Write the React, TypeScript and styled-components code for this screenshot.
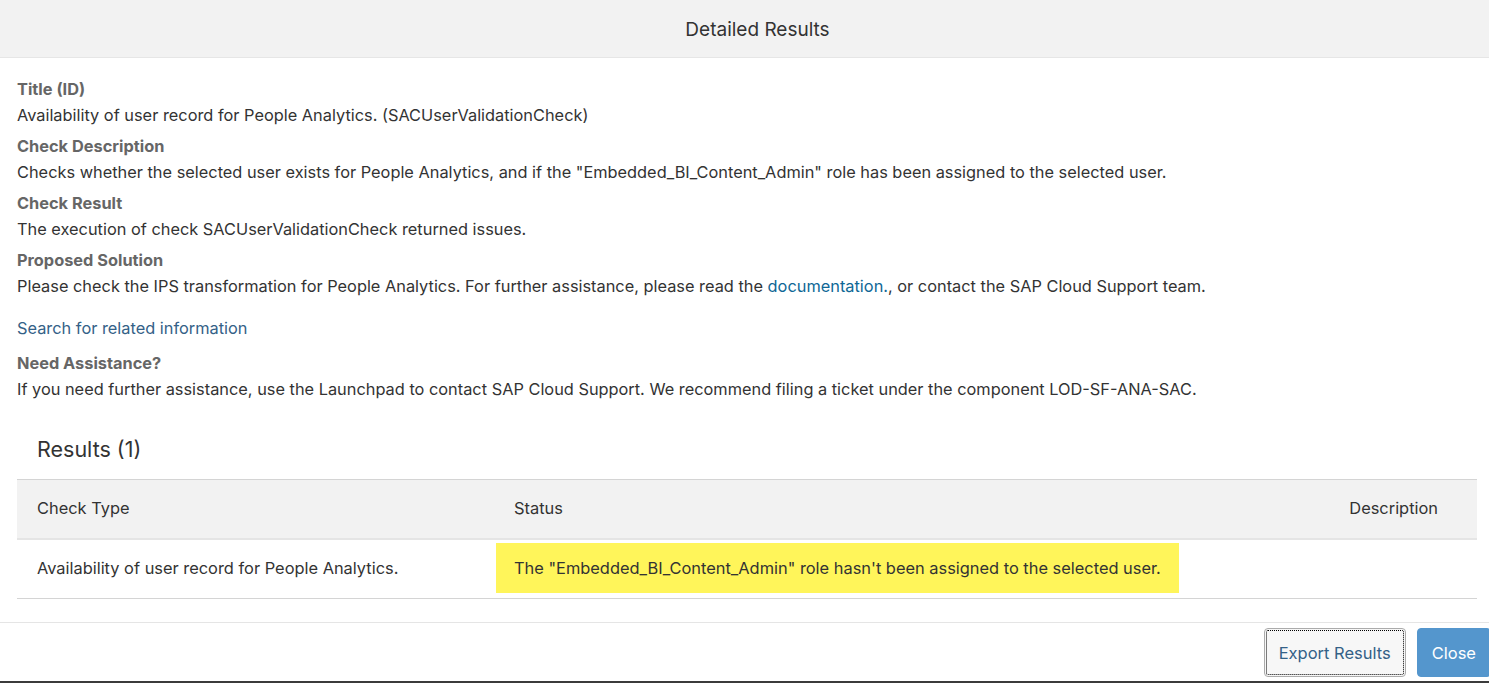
import React from "react";
import styled, { createGlobalStyle } from "styled-components";

const GlobalStyle = createGlobalStyle`
  html, body {
    margin: 0;
    padding: 0;
    background: #3b3b3b;
    font-family: Inter, "Liberation Sans", Arial, sans-serif;
  }
  * { box-sizing: border-box; }
`;

const Dialog = styled.div`
  width: 1489px;
  height: 681px;
  background: #fff;
  display: flex;
  flex-direction: column;
  overflow: hidden;
`;

const Header = styled.header`
  height: 58px;
  flex-shrink: 0;
  background: #f2f2f2;
  border-bottom: 1px solid #e6e6e6;
  display: flex;
  align-items: center;
  justify-content: center;
  font-size: 19px;
  color: #333;
  padding: 1px 0 0 26px;
`;

const Content = styled.main`
  flex: 1;
  padding: 18px 12px 0 17px;
  color: #333;
  font-size: 16.35px;
`;

const Section = styled.section<{ $gap?: number }>`
  margin-top: ${(p) => p.$gap ?? 5}px;
  line-height: 26px;
`;

const Label = styled.div`
  font-weight: 700;
  color: #666;
`;

const Value = styled.div`
  color: #333;
`;

const DocLink = styled.a`
  color: #0f6796;
  text-decoration: none;
`;

const SearchLink = styled.a`
  display: block;
  margin-top: 16px;
  line-height: 26px;
  color: #346187;
  text-decoration: none;
`;

const ResultsTitle = styled.h2`
  margin: 0;
  height: 77px;
  padding: 34px 0 0 20px;
  font-size: 21.5px;
  font-weight: normal;
  line-height: 26px;
  color: #333;
`;

const Table = styled.div`
  display: grid;
  grid-template-columns: 477px 1fr 240px;
  border-top: 1px solid #d4d4d4;
  font-size: 16.4px;
`;

const HeadCell = styled.div<{ $right?: boolean }>`
  height: 60px;
  display: flex;
  align-items: center;
  justify-content: ${(p) => (p.$right ? "flex-end" : "flex-start")};
  padding: ${(p) => (p.$right ? "0 39px 3px 0" : "0 0 3px 20px")};
  background: #f2f2f2;
  border-bottom: 2px solid #e5e5e5;
  color: #333;
`;

const Cell = styled.div<{ $pad?: number }>`
  height: 59px;
  display: flex;
  align-items: center;
  padding-left: ${(p) => p.$pad ?? 20}px;
  padding-bottom: 2px;
  border-bottom: 1px solid #d4d4d4;
  color: #333;
  white-space: nowrap;
`;

const Highlight = styled.span`
  display: inline-flex;
  align-items: center;
  height: 50px;
  padding: 0 18px;
  background: #fff55a;
  color: #333;
  white-space: nowrap;
`;

const Footer = styled.footer`
  height: 59px;
  flex-shrink: 0;
  border-top: 1px solid #e5e5e5;
  display: flex;
  align-items: flex-start;
  justify-content: flex-end;
  gap: 11px;
  padding-top: 5px;
  margin-right: -2px;
`;

const Button = styled.button<{ $primary?: boolean }>`
  height: 49px;
  padding: 0 14px;
  border-radius: 4px;
  font-family: Inter, "Liberation Sans", Arial, sans-serif;
  font-size: 16.5px;
  cursor: pointer;
  border: 1px solid ${(p) => (p.$primary ? "#5496cd" : "#ababab")};
  background: ${(p) => (p.$primary ? "#5496cd" : "#f7f7f7")};
  color: ${(p) => (p.$primary ? "#fff" : "#346187")};
  outline: ${(p) => (p.$primary ? "none" : "1px dotted #000")};
  outline-offset: -3px;
`;

export default function App() {
  return (
    <>
      <GlobalStyle />
      <Dialog>
        <Header>Detailed Results</Header>
        <Content>
          <Section $gap={0}>
            <Label>Title (ID)</Label>
            <Value>Availability of user record for People Analytics. (SACUserValidationCheck)</Value>
          </Section>
          <Section>
            <Label>Check Description</Label>
            <Value>
              Checks whether the selected user exists for People Analytics, and if the
              "Embedded_BI_Content_Admin" role has been assigned to the selected user.
            </Value>
          </Section>
          <Section>
            <Label>Check Result</Label>
            <Value>The execution of check SACUserValidationCheck returned issues.</Value>
          </Section>
          <Section>
            <Label>Proposed Solution</Label>
            <Value>
              Please check the IPS transformation for People Analytics. For further assistance,
              please read the <DocLink href="#">documentation.</DocLink>, or contact the SAP Cloud
              Support team.
            </Value>
          </Section>
          <SearchLink href="#">Search for related information</SearchLink>
          <Section $gap={9}>
            <Label>Need Assistance?</Label>
            <Value>
              If you need further assistance, use the Launchpad to contact SAP Cloud Support. We
              recommend filing a ticket under the component LOD-SF-ANA-SAC.
            </Value>
          </Section>
          <ResultsTitle>Results (1)</ResultsTitle>
          <Table>
            <HeadCell>Check Type</HeadCell>
            <HeadCell>Status</HeadCell>
            <HeadCell $right>Description</HeadCell>
            <Cell>Availability of user record for People Analytics.</Cell>
            <Cell $pad={2}>
              <Highlight>
                The "Embedded_BI_Content_Admin" role hasn't been assigned to the selected user.
              </Highlight>
            </Cell>
            <Cell />
          </Table>
        </Content>
        <Footer>
          <Button>Export Results</Button>
          <Button $primary>Close</Button>
        </Footer>
      </Dialog>
    </>
  );
}
